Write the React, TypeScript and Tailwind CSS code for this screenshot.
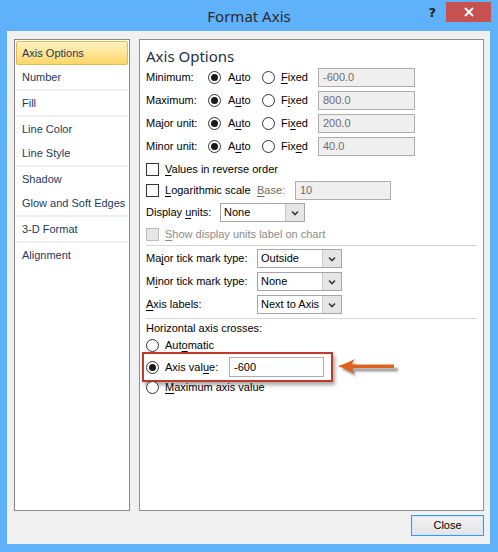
import React from "react";

const UI = "font-['Liberation_Sans',Arial,sans-serif]";

const U = ({ children }: { children: React.ReactNode }) => (
  <span className="underline decoration-1 underline-offset-[2px]">{children}</span>
);

const Radio = ({ checked = false }: { checked?: boolean }) => (
  <span className="flex h-[13px] w-[13px] shrink-0 items-center justify-center rounded-full border border-[#333] bg-white">
    {checked && <span className="h-[7px] w-[7px] rounded-full bg-[#1a1a1a]" />}
  </span>
);

const Check = ({ disabled = false }: { disabled?: boolean }) => (
  <span
    className={
      disabled
        ? "h-[13px] w-[13px] shrink-0 border border-[#bcbcbc] bg-[#e6e6e6]"
        : "h-[13px] w-[13px] shrink-0 border border-[#333] bg-white"
    }
  />
);

const Field = ({
  value,
  disabled = false,
  className = "",
}: {
  value: string;
  disabled?: boolean;
  className?: string;
}) => (
  <div
    className={`flex h-[19px] items-center pl-[4px] ${
      disabled
        ? "border border-[#adadad] bg-[#efefef] text-[#6d6d6d]"
        : "border border-[#abadb3] bg-white text-black"
    } ${className}`}
  >
    {value}
  </div>
);

const Select = ({ value, className = "" }: { value: string; className?: string }) => (
  <div className={`flex h-[19px] border border-[#a5a5a5] bg-white ${className}`}>
    <span className="flex flex-1 items-center pl-[3px]">{value}</span>
    <span className="flex w-[19px] items-center justify-center border-l border-[#c8c8c8] bg-[#e5e5e5]">
      <svg width="8" height="6" viewBox="0 0 8 6">
        <path d="M1 1.5 L4 4.5 L7 1.5" fill="none" stroke="#3a3a3a" strokeWidth="1.6" />
      </svg>
    </span>
  </div>
);

const groups = [
  ["Axis Options", "Number"],
  ["Fill"],
  ["Line Color", "Line Style"],
  ["Shadow", "Glow and Soft Edges"],
  ["3-D Format"],
  ["Alignment"],
];

function Sidebar() {
  return (
    <div className="flex h-[472px] w-[116px] shrink-0 flex-col border border-[#828790] bg-white px-[1px] pt-[1px] text-[#1e395b]">
      {groups.map((g, gi) => (
        <div key={gi} className="flex flex-col">
          {gi > 0 && <div className="h-[2px] bg-[#eff0f2]" />}
          {g.map((item) =>
            item === "Axis Options" ? (
              <div
                key={item}
                className="flex h-[24px] items-center rounded-[2px] border border-[#e0bc55] bg-linear-to-b from-[#fff2bd] to-[#fcd667] pl-[5px]"
              >
                {item}
              </div>
            ) : (
              <div key={item} className="flex h-[24px] items-center pl-[6px]">
                {item}
              </div>
            )
          )}
        </div>
      ))}
    </div>
  );
}

function AxisRow({
  label,
  fixed,
  value,
}: {
  label: string;
  fixed: React.ReactNode;
  value: string;
}) {
  return (
    <div className="flex h-[23px] items-center">
      <span className="w-[62px]">{label}</span>
      <span className="flex w-[54px] items-center">
        <Radio checked />
        <span className="ml-[7px]">
          A<U>u</U>to
        </span>
      </span>
      <span className="flex w-[56px] items-center">
        <Radio />
        <span className="ml-[6px]">{fixed}</span>
      </span>
      <Field value={value} disabled className="w-[97px]" />
    </div>
  );
}

function Options() {
  return (
    <div className="flex h-[472px] flex-1 flex-col border border-[#8f8f8f] bg-white pl-[6px] pr-[6px] text-black">
      <div className="pt-[6px] font-['Segoe_UI','Noto_Sans',sans-serif] text-[15px] leading-[20px] text-[#1e2f45]">
        Axis Options
      </div>
      <AxisRow
        label="Minimum:"
        value="-600.0"
        fixed={
          <>
            <U>F</U>ixed
          </>
        }
      />
      <AxisRow
        label="Maximum:"
        value="800.0"
        fixed={
          <>
            F<U>i</U>xed
          </>
        }
      />
      <AxisRow
        label="Major unit:"
        value="200.0"
        fixed={
          <>
            Fi<U>x</U>ed
          </>
        }
      />
      <AxisRow
        label="Minor unit:"
        value="40.0"
        fixed={
          <>
            Fix<U>e</U>d
          </>
        }
      />

      <div className="flex h-[22px] items-center">
        <Check />
        <span className="ml-[6px]">
          <U>V</U>alues in reverse order
        </span>
      </div>
      <div className="flex h-[21px] items-center">
        <span className="flex w-[111px] items-center">
          <Check />
          <span className="ml-[6px]">
            <U>L</U>ogarithmic scale
          </span>
        </span>
        <span className="w-[38px] text-[#6d6d6d]">
          <U>B</U>ase:
        </span>
        <Field value="10" disabled className="w-[96px]" />
      </div>
      <div className="flex h-[23px] items-center">
        <span className="w-[74px]">
          Display <U>u</U>nits:
        </span>
        <Select value="None" className="w-[85px]" />
      </div>
      <div className="flex h-[20px] items-center">
        <Check disabled />
        <span className="ml-[6px] text-[#8b8b8b]">
          <U>S</U>how display units label on chart
        </span>
      </div>

      <div className="mt-[1px] h-px bg-[#d7d7d7]" />

      <div className="mt-[1px] flex h-[23px] items-center">
        <span className="w-[111px]">
          Ma<U>j</U>or tick mark type:
        </span>
        <Select value="Outside" className="w-[85px]" />
      </div>
      <div className="flex h-[23px] items-center">
        <span className="w-[111px]">
          M<U>i</U>nor tick mark type:
        </span>
        <Select value="None" className="w-[85px]" />
      </div>
      <div className="flex h-[23px] items-center">
        <span className="w-[111px]">
          <U>A</U>xis labels:
        </span>
        <Select value="Next to Axis" className="w-[85px]" />
      </div>

      <div className="mt-[2px] h-px bg-[#d7d7d7]" />

      <div className="flex h-[19px] items-center">Horizontal axis crosses:</div>
      <div className="flex h-[14px] items-center">
        <Radio />
        <span className="ml-[6px]">
          Aut<U>o</U>matic
        </span>
      </div>
      <div className="flex h-[30px] items-center">
        <div className="-ml-[4px] flex h-[30px] w-[191px] items-center border-2 border-[#c0392b] pl-[2px] shadow-[2px_3px_4px_rgba(0,0,0,0.35)]">
          <span className="flex w-[83px] items-center">
            <Radio checked />
            <span className="ml-[6px]">
              Axis val<U>u</U>e:
            </span>
          </span>
          <Field value="-600" className="h-[20px] w-[95px]" />
        </div>
        <svg width="64" height="26" viewBox="0 0 64 26" className="ml-[3px]">
          <defs>
            <filter id="blur" x="-10%" y="-50%" width="120%" height="200%">
              <feGaussianBlur stdDeviation="1.1" />
            </filter>
          </defs>
          <path
            d="M5 15 C11 13 16 11 21 8 C18 12 18 13 19 14 L62 14 L62 17.5 L19 17.5 C18 19 18 20 21 23 C16 20 11 18 5 15 Z"
            fill="#000"
            opacity="0.4"
            filter="url(#blur)"
          />
          <path
            d="M2 12 C8 10 13 8 19 5 C16 9 16 10 17 10.5 L58 10.5 L58 14 L17 14 C16 15 16 16 19 20 C13 17 8 14 2 12 Z"
            fill="#e0601f"
          />
        </svg>
      </div>
      <div className="flex h-[10px] items-center">
        <Radio />
        <span className="ml-[6px]">
          <U>M</U>aximum axis value
        </span>
      </div>
    </div>
  );
}

export default function App() {
  return (
    <div className={`flex h-[552px] w-[498px] flex-col bg-[#5fb1fa] ${UI} text-[11px]`}>
      <div className="grid h-[31px] grid-cols-[1fr_auto_1fr]">
        <div />
        <div className="pt-[6px] font-['Segoe_UI','Noto_Sans',sans-serif] text-[15px] leading-[20px] text-[#2b2b2b]">
          Format Axis
        </div>
        <div className="flex justify-end pr-[7px]">
          <span className="mr-[10px] mt-[3px] font-['DejaVu_Sans',sans-serif] text-[13px] font-bold text-[#222]">
            ?
          </span>
          <div className="mt-[2px] flex h-[20px] w-[45px] items-center justify-center bg-[#c75050]">
            <svg width="10" height="10" viewBox="0 0 10 10">
              <path d="M1 1 L9 9 M9 1 L1 9" stroke="#fff" strokeWidth="2" />
            </svg>
          </div>
        </div>
      </div>

      <div className="ml-[7px] flex h-[513px] w-[483px] flex-col bg-[#f0f0f0] pb-[8px] pl-[7px] pr-[6px] pt-[8px]">
        <div className="flex gap-[9px]">
          <Sidebar />
          <Options />
        </div>
        <div className="mt-[4px] flex justify-end">
          <button className="flex h-[21px] w-[73px] items-center justify-center border border-[#3399ff] bg-linear-to-b from-[#f2f2f2] to-[#e4e4e4] text-black shadow-[inset_0_0_0_1px_#cfe6fd]">
            Close
          </button>
        </div>
      </div>
    </div>
  );
}
